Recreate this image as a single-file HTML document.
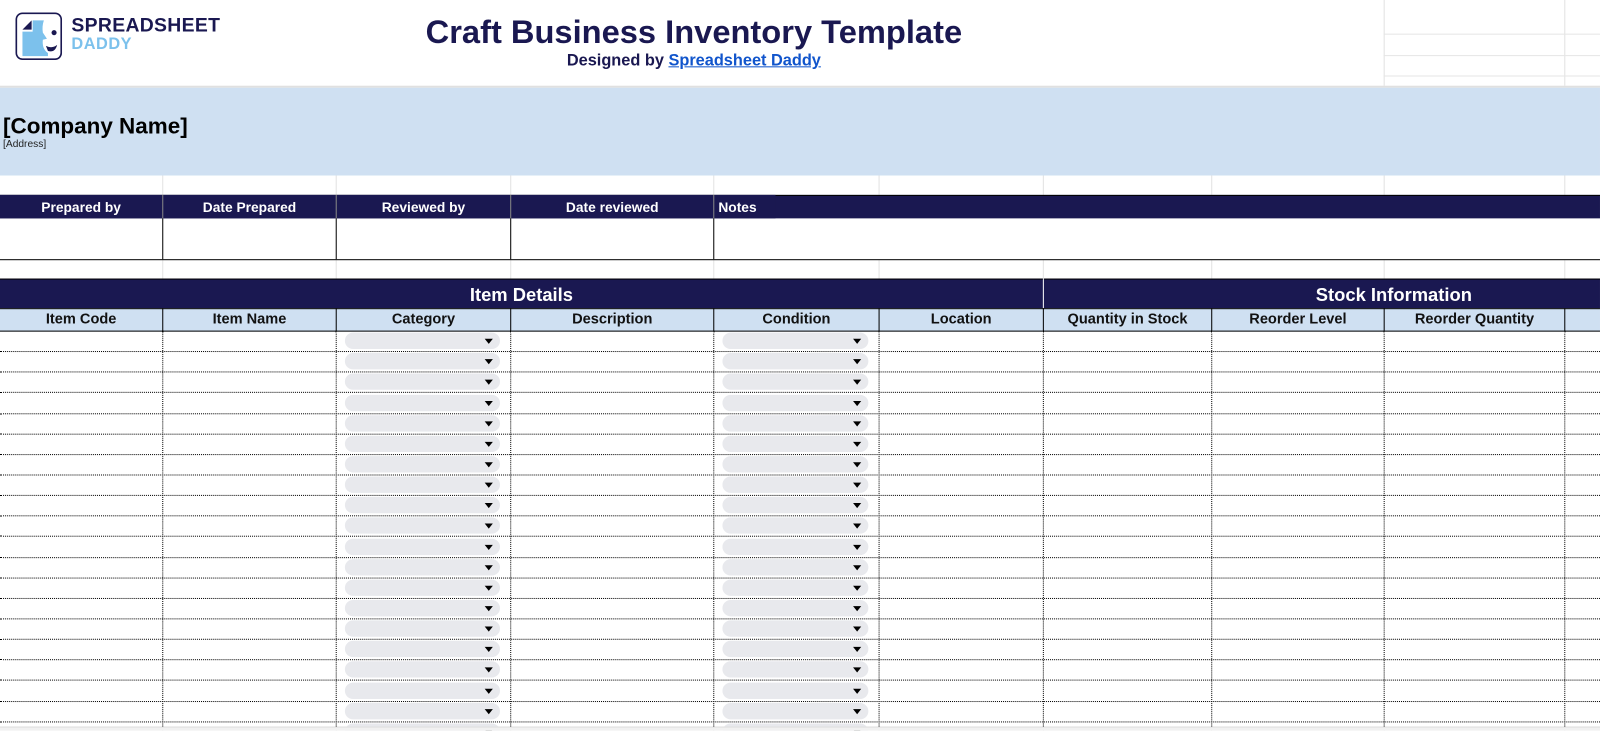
<!DOCTYPE html>
<html><head><meta charset="utf-8"><style>
*{margin:0;padding:0;box-sizing:border-box}
body{width:1600px;height:730px;overflow:hidden;background:#fff;font-family:"Liberation Sans",Arial,sans-serif;position:relative}
#w{position:absolute;left:0;top:0;width:1568px;height:716px;transform:scale(1.0204);transform-origin:0 0;overflow:hidden}
.a{position:absolute}
.dk{background:#1a1851;color:#fff;font-weight:bold;font-size:13.5px;text-align:center}
.lb{background:#cfe0f2}
.ch{position:absolute;top:302px;height:22px;line-height:22px;font-weight:bold;font-size:14.3px;text-align:center;color:#111;border-right:1px solid #000}
.gv{position:absolute;width:1px;background:#e2e2e2}
.dv{position:absolute;top:324px;height:406px;border-left:1px dotted #000;width:0}
.hr{position:absolute;left:0;width:1600px;border-top:1px dotted #000;height:0}
.dd{position:absolute;height:16px;background:#e8e9ed;border-radius:8px}
.dd:after{content:"";position:absolute;right:7px;top:6px;border-left:4px solid transparent;border-right:4px solid transparent;border-top:5px solid #000}
</style></head><body><div id="w">
<div class="a" style="left:0;top:84px;width:1600px;height:2px;background:#e0e0e0"></div>
<div class="gv" style="left:1356px;top:0;height:84px"></div>
<div class="gv" style="left:1533px;top:0;height:84px"></div>
<div class="a" style="left:1356px;top:33px;width:244px;height:1px;background:#e6e6e6"></div>
<div class="a" style="left:1356px;top:54px;width:244px;height:1px;background:#e6e6e6"></div>
<div class="a" style="left:1356px;top:74px;width:244px;height:1px;background:#e6e6e6"></div>
<svg class="a" style="left:15px;top:12px" width="46" height="47" viewBox="0 0 46 47">
<rect x="1" y="1" width="44" height="45" rx="6" fill="#fff" stroke="#1a1851" stroke-width="1.6"/>
<path d="M7 17 L16 8 L16 17 Z" fill="#1a1851"/>
<path d="M17 8 L28 8 Q26 14 27 20 L31 26 L27 27 Q26 36 32 40 L32 43 L7 43 L7 19 L17 19 Z" fill="#7cc1ec"/>
<circle cx="38" cy="20" r="2.5" fill="#1a1851"/>
<path d="M30 33 Q36 36 41 32 Q39 40 32 38 Z" fill="#1a1851"/>
</svg>
<div class="a" style="left:70px;top:15px;font-size:19px;font-weight:bold;color:#1a1851;letter-spacing:0.3px">SPREADSHEET</div>
<div class="a" style="left:70px;top:35px;font-size:16px;font-weight:bold;color:#7cc1ec;letter-spacing:0.5px">DADDY</div>
<div class="a" style="left:320px;top:13px;width:720px;text-align:center;font-size:32px;font-weight:bold;color:#1a1851">Craft Business Inventory Template</div>
<div class="a" style="left:340px;top:51px;width:680px;text-align:center;font-size:16px;font-weight:bold;color:#1a1851">Designed by <span style="color:#1155cc;text-decoration:underline">Spreadsheet Daddy</span></div>
<div class="a lb" style="left:0;top:86px;width:1600px;height:86px"></div>
<div class="a" style="left:3px;top:111px;font-size:22px;font-weight:bold;color:#000">[Company Name]</div>
<div class="a" style="left:3px;top:136px;font-size:10px;color:#222">[Address]</div>
<div class="gv" style="left:159px;top:172px;height:19px"></div><div class="gv" style="left:329px;top:172px;height:19px"></div><div class="gv" style="left:500px;top:172px;height:19px"></div><div class="gv" style="left:699px;top:172px;height:19px"></div><div class="gv" style="left:861px;top:172px;height:19px"></div><div class="gv" style="left:1022px;top:172px;height:19px"></div><div class="gv" style="left:1187px;top:172px;height:19px"></div><div class="gv" style="left:1356px;top:172px;height:19px"></div><div class="gv" style="left:1533px;top:172px;height:19px"></div>
<div class="gv" style="left:159px;top:255px;height:18px"></div><div class="gv" style="left:329px;top:255px;height:18px"></div><div class="gv" style="left:500px;top:255px;height:18px"></div><div class="gv" style="left:699px;top:255px;height:18px"></div><div class="gv" style="left:861px;top:255px;height:18px"></div><div class="gv" style="left:1022px;top:255px;height:18px"></div><div class="gv" style="left:1187px;top:255px;height:18px"></div><div class="gv" style="left:1356px;top:255px;height:18px"></div><div class="gv" style="left:1533px;top:255px;height:18px"></div>
<div class="a dk" style="left:0;top:191px;width:1600px;height:23px;border-top:1px solid #000"></div>
<div class="a dk" style="left:0;top:191px;width:159px;height:23px;line-height:25px">Prepared by</div>
<div class="a dk" style="left:160px;top:191px;width:169px;height:23px;line-height:25px">Date Prepared</div>
<div class="a dk" style="left:330px;top:191px;width:170px;height:23px;line-height:25px">Reviewed by</div>
<div class="a dk" style="left:501px;top:191px;width:198px;height:23px;line-height:25px">Date reviewed</div>
<div class="a dk" style="left:700px;top:191px;width:60px;height:23px;line-height:25px;text-align:left;padding-left:4px">Notes</div>
<div class="a" style="left:159px;top:191px;width:1px;height:23px;background:#888"></div>
<div class="a" style="left:329px;top:191px;width:1px;height:23px;background:#888"></div>
<div class="a" style="left:500px;top:191px;width:1px;height:23px;background:#888"></div>
<div class="a" style="left:699px;top:191px;width:1px;height:23px;background:#888"></div>
<div class="a" style="left:159px;top:214px;width:1px;height:40px;background:#000"></div>
<div class="a" style="left:329px;top:214px;width:1px;height:40px;background:#000"></div>
<div class="a" style="left:500px;top:214px;width:1px;height:40px;background:#000"></div>
<div class="a" style="left:699px;top:214px;width:1px;height:40px;background:#000"></div>
<div class="a" style="left:0;top:254px;width:1600px;height:1px;background:#000"></div>
<div class="a dk" style="left:0;top:273px;width:1022px;height:29px;line-height:31px;font-size:18px;border-top:1px solid #000">Item Details</div>
<div class="a dk" style="left:1023px;top:273px;width:577px;height:29px;line-height:31px;font-size:18px;border-top:1px solid #000"><span style="position:absolute;left:0;width:686px">Stock Information</span></div>
<div class="a lb" style="left:0;top:302px;width:1600px;height:23px;border-top:1px solid #000;border-bottom:1px solid #000"></div>
<div class="ch" style="left:0;width:160px">Item Code</div>
<div class="ch" style="left:160px;width:170px">Item Name</div>
<div class="ch" style="left:330px;width:171px">Category</div>
<div class="ch" style="left:501px;width:199px">Description</div>
<div class="ch" style="left:700px;width:162px">Condition</div>
<div class="ch" style="left:862px;width:161px">Location</div>
<div class="ch" style="left:1023px;width:165px">Quantity in Stock</div>
<div class="ch" style="left:1188px;width:169px">Reorder Level</div>
<div class="ch" style="left:1357px;width:177px">Reorder Quantity</div>
<div class="dv" style="left:159px"></div><div class="dv" style="left:329px"></div><div class="dv" style="left:500px"></div><div class="dv" style="left:699px"></div><div class="dv" style="left:861px"></div><div class="dv" style="left:1022px"></div><div class="dv" style="left:1187px"></div><div class="dv" style="left:1356px"></div><div class="dv" style="left:1533px"></div>
<div class="hr" style="top:344px"></div><div class="hr" style="top:364px"></div><div class="hr" style="top:384px"></div><div class="hr" style="top:405px"></div><div class="hr" style="top:425px"></div><div class="hr" style="top:445px"></div><div class="hr" style="top:465px"></div><div class="hr" style="top:485px"></div><div class="hr" style="top:505px"></div><div class="hr" style="top:525px"></div><div class="hr" style="top:546px"></div><div class="hr" style="top:566px"></div><div class="hr" style="top:586px"></div><div class="hr" style="top:606px"></div><div class="hr" style="top:626px"></div><div class="hr" style="top:646px"></div><div class="hr" style="top:666px"></div><div class="hr" style="top:687px"></div><div class="hr" style="top:707px"></div>
<div class="dd" style="left:338px;top:326px;width:152px"></div><div class="dd" style="left:708px;top:326px;width:143px"></div>
<div class="dd" style="left:338px;top:346px;width:152px"></div><div class="dd" style="left:708px;top:346px;width:143px"></div>
<div class="dd" style="left:338px;top:366px;width:152px"></div><div class="dd" style="left:708px;top:366px;width:143px"></div>
<div class="dd" style="left:338px;top:387px;width:152px"></div><div class="dd" style="left:708px;top:387px;width:143px"></div>
<div class="dd" style="left:338px;top:407px;width:152px"></div><div class="dd" style="left:708px;top:407px;width:143px"></div>
<div class="dd" style="left:338px;top:427px;width:152px"></div><div class="dd" style="left:708px;top:427px;width:143px"></div>
<div class="dd" style="left:338px;top:447px;width:152px"></div><div class="dd" style="left:708px;top:447px;width:143px"></div>
<div class="dd" style="left:338px;top:467px;width:152px"></div><div class="dd" style="left:708px;top:467px;width:143px"></div>
<div class="dd" style="left:338px;top:487px;width:152px"></div><div class="dd" style="left:708px;top:487px;width:143px"></div>
<div class="dd" style="left:338px;top:507px;width:152px"></div><div class="dd" style="left:708px;top:507px;width:143px"></div>
<div class="dd" style="left:338px;top:528px;width:152px"></div><div class="dd" style="left:708px;top:528px;width:143px"></div>
<div class="dd" style="left:338px;top:548px;width:152px"></div><div class="dd" style="left:708px;top:548px;width:143px"></div>
<div class="dd" style="left:338px;top:568px;width:152px"></div><div class="dd" style="left:708px;top:568px;width:143px"></div>
<div class="dd" style="left:338px;top:588px;width:152px"></div><div class="dd" style="left:708px;top:588px;width:143px"></div>
<div class="dd" style="left:338px;top:608px;width:152px"></div><div class="dd" style="left:708px;top:608px;width:143px"></div>
<div class="dd" style="left:338px;top:628px;width:152px"></div><div class="dd" style="left:708px;top:628px;width:143px"></div>
<div class="dd" style="left:338px;top:648px;width:152px"></div><div class="dd" style="left:708px;top:648px;width:143px"></div>
<div class="dd" style="left:338px;top:669px;width:152px"></div><div class="dd" style="left:708px;top:669px;width:143px"></div>
<div class="dd" style="left:338px;top:689px;width:152px"></div><div class="dd" style="left:708px;top:689px;width:143px"></div>
<div class="dd" style="left:338px;top:709px;width:152px"></div><div class="dd" style="left:708px;top:709px;width:143px"></div>
<div class="a" style="left:0;top:712px;width:1600px;height:15px;background:#f1f1f1;border-top:1px solid #ddd"></div>
</div></body></html>
